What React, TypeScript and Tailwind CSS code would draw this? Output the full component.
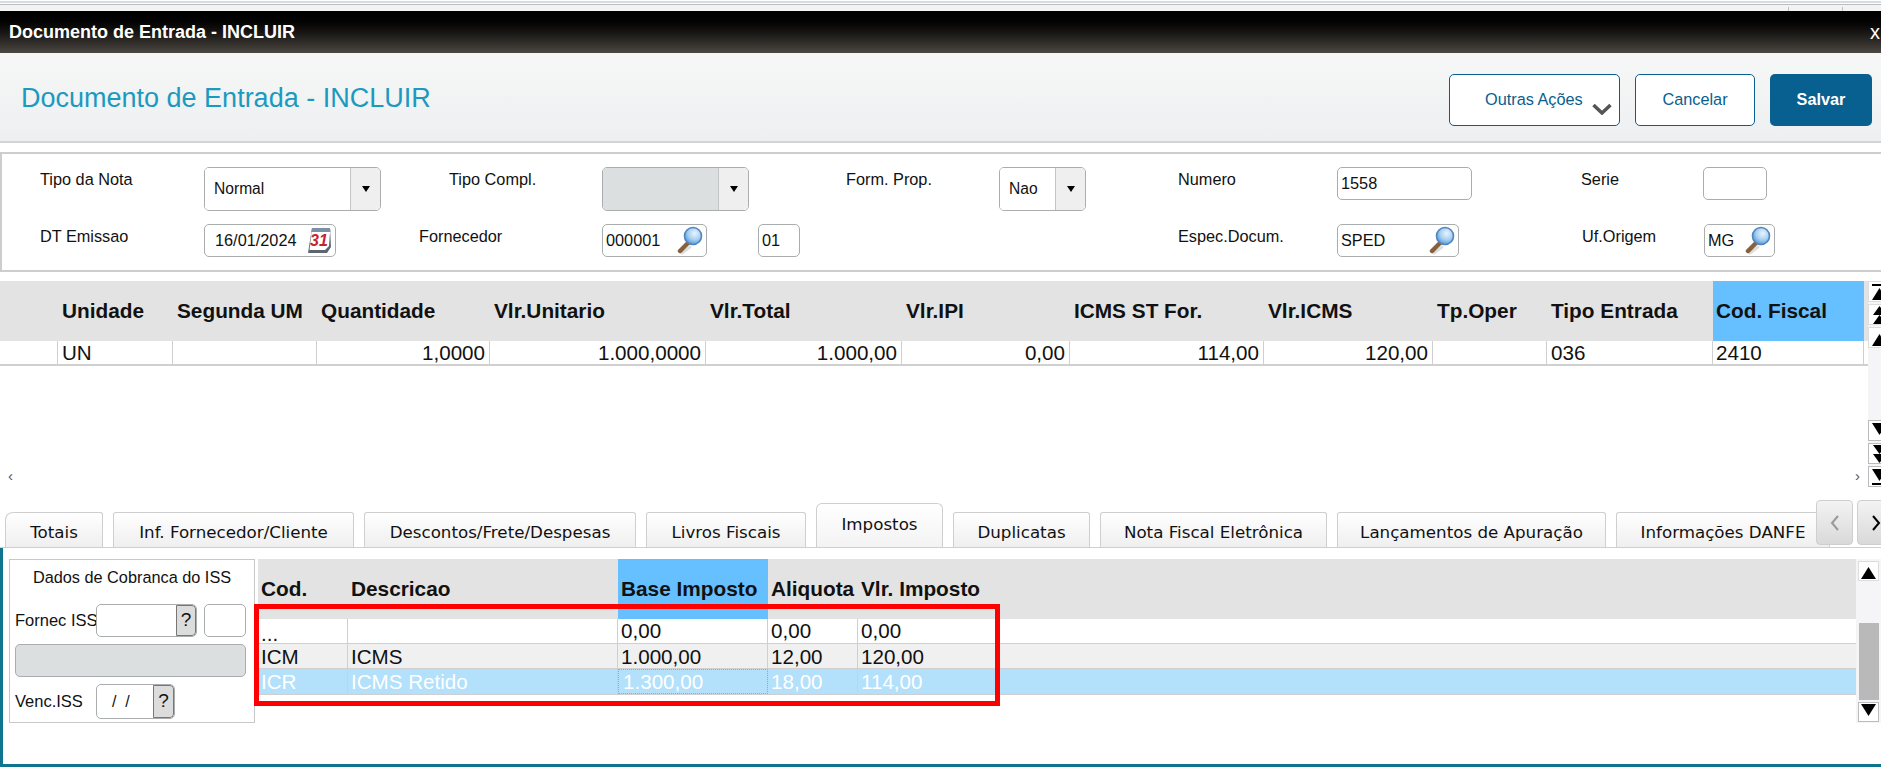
import React from "react";

const arial = "font-['Liberation_Sans',Arial,sans-serif]";

const Lupa = () => (
  <svg width="27" height="30" viewBox="0 0 27 30" className="shrink-0 -translate-x-[1px]">
    <defs>
      <radialGradient id="lens" cx="0.6" cy="0.35" r="0.7">
        <stop offset="0" stopColor="#e8f4ff" />
        <stop offset="0.55" stopColor="#a6cff2" />
        <stop offset="1" stopColor="#4f8fd0" />
      </radialGradient>
    </defs>
    <path d="M11 17 L3 25" stroke="#8a5f3c" strokeWidth="4.5" strokeLinecap="round" />
    <path d="M5 27 L13 21" stroke="#00000022" strokeWidth="3" strokeLinecap="round" />
    <circle cx="16" cy="10" r="8.5" fill="url(#lens)" stroke="#4f86bd" strokeWidth="1.6" />
  </svg>
);

const Calendario = () => (
  <svg width="26" height="28" viewBox="0 0 26 28" className="shrink-0">
    <path d="M5 1 H23 L24 20 L20 26 H1 Z" fill="#5d6670" />
    <path d="M5 1 H23 L23.5 5 H4.6 Z" fill="#7d8fa8" />
    <path d="M4.5 5 H23 L22 19 L18 23 H2.5 Z" fill="#fff" />
    <text x="12" y="19" textAnchor="middle" fontSize="16" fontWeight="700" fontStyle="italic" fill="#c8232c" fontFamily="Liberation Sans, sans-serif">31</text>
  </svg>
);

const Tri = ({ down = false, bar = 0, dbl = false, size = 13 }: { down?: boolean; bar?: number; dbl?: boolean; size?: number }) => (
  <svg width={size + 2} height="18" viewBox="0 0 15 18" className="shrink-0">
    {!down && bar > 0 && <rect x="0" y="1" width="15" height="2" fill="#000" />}
    {!down && dbl && <path d="M7.5 0 L14 9 H1 Z" fill="#000" />}
    {!down && <path d={dbl ? "M7.5 9 L14 18 H1 Z" : "M7.5 5 L15 17 H0 Z"} fill="#000" />}
    {down && dbl && <path d="M1 9 H14 L7.5 18 Z" fill="#000" />}
    {down && <path d={dbl ? "M1 0 H14 L7.5 9 Z" : "M0 1 H15 L7.5 13 Z"} fill="#000" />}
    {down && bar > 0 && <rect x="0" y="15" width="15" height="2" fill="#000" />}
  </svg>
);

const Label = ({ text, className }: { text: string; className: string }) => (
  <div className={`text-[16.3px] leading-[24px] text-[#111] whitespace-nowrap ${className}`}>{text}</div>
);

const Select = ({ value, width, off = false }: { value: string; width: string; off?: boolean }) => (
  <div className={`flex h-[44px] shrink-0 overflow-hidden rounded-[5px] border border-[#a9adad] ${width}`}>
    <div className={`flex flex-1 items-center pl-[9px] text-[15.6px] text-[#111] ${off ? "bg-[#dcdfdf]" : "bg-white"}`}>{value}</div>
    <div className="flex w-[30px] items-center justify-center border-l border-[#c4c4c4] bg-[#efefef]">
      <span className="h-0 w-0 border-x-[4px] border-t-[6px] border-x-transparent border-t-black" />
    </div>
  </div>
);

const Input = ({ value = "", width, pad = "pl-[3px]", children }: { value?: string; width: string; pad?: string; children?: React.ReactNode }) => (
  <div className={`flex h-[33px] shrink-0 items-center justify-between rounded-[5px] border border-[#a9adad] bg-white text-[16.3px] text-[#111] ${pad} ${width}`}>
    <span>{value}</span>
    {children}
  </div>
);

const gridCols = [
  { w: "w-[58px]", h: "", v: "", right: false },
  { w: "w-[115px]", h: "Unidade", v: "UN", right: false },
  { w: "w-[144px]", h: "Segunda UM", v: "", right: false },
  { w: "w-[173px]", h: "Quantidade", v: "1,0000", right: true },
  { w: "w-[216px]", h: "Vlr.Unitario", v: "1.000,0000", right: true },
  { w: "w-[196px]", h: "Vlr.Total", v: "1.000,00", right: true },
  { w: "w-[168px]", h: "Vlr.IPI", v: "0,00", right: true },
  { w: "w-[194px]", h: "ICMS ST For.", v: "114,00", right: true },
  { w: "w-[169px]", h: "Vlr.ICMS", v: "120,00", right: true },
  { w: "w-[114px]", h: "Tp.Oper", v: "", right: false },
  { w: "w-[166px]", h: "Tipo Entrada", v: "036", right: false },
  { w: "w-[151px]", h: "Cod. Fiscal", v: "2410", right: false },
];

const tabs = [
  { t: "Totais", w: "w-[98px]", first: true },
  { t: "Inf. Fornecedor/Cliente", w: "w-[241px]" },
  { t: "Descontos/Frete/Despesas", w: "w-[272px]" },
  { t: "Livros Fiscais", w: "w-[160px]" },
  { t: "Impostos", w: "w-[127px]", active: true },
  { t: "Duplicatas", w: "w-[137px]" },
  { t: "Nota Fiscal Eletrônica", w: "w-[227px]" },
  { t: "Lançamentos de Apuração", w: "w-[269px]" },
  { t: "Informações DANFE", w: "w-[214px]" },
];

const impCols = [
  { w: "w-[90px]", h: "Cod.", hl: false },
  { w: "w-[270px]", h: "Descricao", hl: false },
  { w: "w-[150px]", h: "Base Imposto", hl: true },
  { w: "w-[90px]", h: "Aliquota", hl: false },
  { w: "flex-1", h: "Vlr. Imposto", hl: false },
];

const impRows = [
  { bg: "bg-white text-[#111] leading-[24px]", h: "h-[25px]", line: "border-[#cfcfcf]", cells: ["...", "", "0,00", "0,00", "0,00"] },
  { bg: "bg-[#f0f0f0] text-[#111] leading-[26px]", h: "h-[25px]", line: "border-[#cfcfcf]", cells: ["ICM", "ICMS", "1.000,00", "12,00", "120,00"] },
  { bg: "bg-[#b3e0fb] text-white leading-[26px]", h: "h-[26px]", line: "border-[#cfcfcf]", cells: ["ICR", "ICMS Retido", "1.300,00", "18,00", "114,00"] },
];

export default function App() {
  return (
    <div className={`flex h-[772px] w-[1881px] flex-col overflow-hidden bg-white ${arial}`}>
      {/* faixa do navegador */}
      <div className="relative h-[11px] shrink-0 bg-white">
        <div className="mt-[1px] h-[2px] bg-[#d5dde3]" />
        <div className="mt-[1px] h-[1px] bg-[#bdbdbd]" />
        <div className="flex h-[6px] justify-end gap-[53px] bg-[#f3f3f3] pr-[38px]">
          <span className="mt-[2px] h-[4px] w-px bg-[#c0c0c0]" />
          <span className="mt-[2px] h-[4px] w-px bg-[#c0c0c0]" />
        </div>
      </div>

      <div className="flex h-[42px] shrink-0 items-center justify-between bg-gradient-to-b from-black to-[#4b4742] pl-[9px] text-[18px] font-bold text-white">
        <span>Documento de Entrada - INCLUIR</span>
        <span className="mr-[1px] text-[20px] font-normal">x</span>
      </div>

      <div className="flex h-[90px] shrink-0 items-center justify-between border-b-2 border-[#d4d4d4] bg-gradient-to-b from-[#f6f7f6] to-[#eeeff1] pl-[21px] pr-[9px]">
        <h1 className="mt-[2px] text-[27px] text-[#1b9ac0]">Documento de Entrada - INCLUIR</h1>
        <div className="mt-[6px] flex gap-[15px] text-[16.3px] text-[#0a5e8f]">
          <button className="relative flex h-[52px] w-[171px] items-center rounded-[5px] border border-[#0a5e8f] bg-white pl-[35px] pb-[1px]">
            Outras Ações
            <svg width="20" height="12" viewBox="0 0 20 12" className="absolute left-[142px] top-[28px]">
              <path d="M1.5 2 L10 10 L18.5 2" fill="none" stroke="#555" strokeWidth="3.5" />
            </svg>
          </button>
          <button className="h-[52px] w-[120px] rounded-[5px] border border-[#0a5e8f] bg-white pb-[1px]">Cancelar</button>
          <button className="h-[52px] w-[102px] rounded-[5px] bg-[#07608f] pb-[1px] font-bold text-white">Salvar</button>
        </div>
      </div>

      {/* formulario */}
      <div className="mt-[9px] h-[120px] shrink-0 border-y-2 border-l-2 border-[#cdcdcd] pl-[38px] pt-[13px]">
        <div className="flex h-[44px] items-start">
          <Label text="Tipo da Nota" className="w-[164px]" />
          <Select value="Normal" width="w-[177px]" />
          <Label text="Tipo Compl." className="ml-[68px] w-[153px]" />
          <Select value="" width="w-[147px]" off />
          <Label text="Form. Prop." className="ml-[97px] w-[153px]" />
          <Select value="Nao" width="w-[87px]" />
          <Label text="Numero" className="ml-[92px] w-[159px]" />
          <Input value="1558" width="w-[135px]" />
          <Label text="Serie" className="ml-[109px] w-[122px]" />
          <Input width="w-[64px]" />
        </div>
        <div className="mt-[13px] flex items-start">
          <Label text="DT Emissao" className="w-[164px]" />
          <Input value="16/01/2024" width="w-[132px]" pad="pl-[10px] pr-[2px]"><Calendario /></Input>
          <Label text="Fornecedor" className="ml-[83px] w-[183px]" />
          <Input value="000001" width="w-[105px]" pad="pl-[3px] pr-[1px]"><Lupa /></Input>
          <Input value="01" width="ml-[51px] w-[42px]" pad="pl-[3px]" />
          <Label text="Espec.Docum." className="ml-[378px] w-[159px]" />
          <Input value="SPED" width="w-[122px]" pad="pl-[3px] pr-[1px]"><Lupa /></Input>
          <Label text="Uf.Origem" className="ml-[123px] w-[122px]" />
          <Input value="MG" width="w-[71px]" pad="pl-[3px] pr-[1px]"><Lupa /></Input>
        </div>
      </div>

      {/* grade de itens */}
      <div className="mt-[9px] flex h-[227px] shrink-0">
        <div className="relative w-[1868px] shrink-0">
          <div className="flex h-[60px] bg-[#e3e3e3] text-[20.8px] font-bold text-[#111]">
            {gridCols.map((c) => (
              <div key={c.h || "x"} className={`flex shrink-0 items-center whitespace-nowrap ${c.w} ${c.h === "Cod. Fiscal" ? "bg-[#66bfff] pl-[3px]" : "pl-[4px]"}`}>
                {c.h}
              </div>
            ))}
          </div>
          <div className="flex h-[25px] border-b-2 border-[#d0d0d0] text-[20.6px] leading-[24px] text-[#111]">
            {gridCols.map((c) => (
              <div key={c.h || "x"} className={`shrink-0 whitespace-nowrap border-r border-[#cfcfcf] ${c.w} ${c.right ? "px-[4px] text-right" : c.h === "Cod. Fiscal" ? "pl-[3px]" : "px-[4px]"}`}>
                {c.v}
              </div>
            ))}
          </div>
          <div className="flex justify-between pl-[8px] pr-[8px] pt-[100px] text-[15px] leading-[20px] text-[#555]">
            <span>‹</span>
            <span>›</span>
          </div>
        </div>
        <div className="flex h-[206px] w-[13px] shrink-0 flex-col justify-between bg-[#f5f5f7]">
          <div className="flex flex-col gap-[2px]">
            <div className="flex h-[21px] w-[16px] items-center border border-[#ddd] bg-white pl-[3px]"><Tri bar={1} /></div>
            <div className="flex h-[21px] w-[16px] items-center border border-[#ddd] bg-white pl-[3px]"><Tri dbl /></div>
            <div className="flex h-[21px] w-[16px] items-center border border-[#ddd] bg-white pl-[3px]"><Tri /></div>
          </div>
          <div className="flex flex-col gap-[2px]">
            <div className="flex h-[21px] w-[16px] items-center border border-[#bbb] bg-white pl-[3px]"><Tri down /></div>
            <div className="flex h-[21px] w-[16px] items-center border border-[#bbb] bg-white pl-[3px]"><Tri down dbl /></div>
            <div className="flex h-[21px] w-[16px] items-center border border-[#bbb] bg-white pl-[3px]"><Tri down bar={1} /></div>
          </div>
        </div>
      </div>

      {/* abas */}
      <div className="relative -mt-[4px] flex h-[44px] shrink-0 items-end gap-[10px] border-b border-[#cfcfcf] pl-[5px] font-['DejaVu_Sans',Verdana,sans-serif] text-[16.7px] text-[#111]">
        {tabs.map((t) => (
          <div
            key={t.t}
            className={`flex shrink-0 items-center justify-center whitespace-nowrap rounded-t-[3px] border border-b-0 border-[#cfcfcf] bg-gradient-to-b from-white to-[#efefef] ${t.w} ${t.active ? "h-[44px] rounded-t-[6px] pb-[2px] to-[#f3f3f3]" : "h-[35px] pt-[6px]"} ${t.first ? "rounded-tl-[8px]" : ""}`}
          >
            {t.t}
          </div>
        ))}
        <div className="absolute left-[1816px] top-[-4px] flex gap-[4px]">
          <div className="flex h-[45px] w-[37px] items-center justify-center rounded-[4px] border border-[#cfcfcf] bg-gradient-to-b from-[#f3f3f3] to-[#d9d9d9]">
            <svg width="10" height="16" viewBox="0 0 10 16"><path d="M8 1 L2 8 L8 15" fill="none" stroke="#999" strokeWidth="2" /></svg>
          </div>
          <div className="flex h-[45px] w-[37px] items-center justify-center rounded-[4px] border border-[#cfcfcf] bg-gradient-to-b from-[#f3f3f3] to-[#d9d9d9]">
            <svg width="10" height="16" viewBox="0 0 10 16"><path d="M2 1 L8 8 L2 15" fill="none" stroke="#000" strokeWidth="2" /></svg>
          </div>
        </div>
      </div>

      {/* painel inferior */}
      <div className="relative flex h-[219px] shrink-0 border-b-[3px] border-l-[3px] border-[#0e7490] pl-[6px] pt-[11px]">
        <div className="h-[164px] w-[246px] shrink-0 border border-[#c8c8c8] px-[5px]">
          <div className="mt-[7px] text-center text-[16.3px] leading-[20px] text-[#111] whitespace-nowrap">Dados de Cobranca do ISS</div>
          <div className="mt-[17px] flex items-center">
            <span className="w-[81px] text-[16.5px] text-[#111] whitespace-nowrap">Fornec ISS</span>
            <div className="flex h-[33px] w-[101px] justify-end overflow-hidden rounded-[5px] border border-[#a9adad] bg-white">
              <span className="flex w-[20px] items-center justify-center rounded-r-[4px] border border-[#777] bg-[#dcdcdc] text-[19px] text-[#111]">?</span>
            </div>
            <div className="ml-[7px] h-[33px] w-[42px] rounded-[5px] border border-[#a9adad] bg-white" />
          </div>
          <div className="mt-[7px] h-[33px] w-[231px] rounded-[5px] border border-[#a9adad] bg-[#dcdfdf]" />
          <div className="mt-[7px] flex items-center">
            <span className="w-[81px] text-[16.5px] text-[#111]">Venc.ISS</span>
            <div className="flex h-[35px] w-[79px] items-center justify-between overflow-hidden rounded-[5px] border border-[#a9adad] bg-white pl-[15px] text-[16px] text-[#111]">
              <span>/ &nbsp;/</span>
              <span className="flex h-full w-[21px] items-center justify-center rounded-r-[4px] border border-[#777] bg-[#dcdcdc] text-[19px]">?</span>
            </div>
          </div>
        </div>

        <div className="ml-[3px] w-[1598px] shrink-0">
          <div className="flex h-[60px] bg-[#e3e3e3] text-[20.8px] font-bold text-[#111]">
            {impCols.map((c) => (
              <div key={c.h} className={`flex items-center whitespace-nowrap pl-[3px] ${c.w} ${c.hl ? "bg-[#66bfff]" : ""}`}>{c.h}</div>
            ))}
          </div>
          {impRows.map((r) => (
            <div key={r.cells[0]} className={`flex border-b ${r.line} ${r.bg} ${r.h} text-[20.6px]`}>
              {r.cells.map((v, i) => (
                <div key={i} className={`whitespace-nowrap pl-[3px] ${impCols[i].w} ${i < 4 ? `border-r ${r.line}` : ""} ${v === "1.300,00" ? "outline-1 -outline-offset-1 outline-dotted outline-[#f08a7a] pl-[5px]" : ""} ${v === "..." ? "pt-[3px]" : ""}`}>{v}</div>
              ))}
            </div>
          ))}
        </div>

        <div className="flex h-[164px] w-[25px] shrink-0 flex-col items-center bg-[#f5f5f7] pt-[2px]">
          <div className="flex h-[20px] w-[21px] items-center justify-center border border-[#ddd] bg-white"><Tri /></div>
          <div className="mt-[42px] h-[77px] w-[20px] bg-[#b9b9b9]" />
          <div className="mt-[2px] flex h-[20px] w-[21px] items-center justify-center border border-[#bbb] bg-white"><Tri down /></div>
        </div>

        {/* destaque vermelho */}
        <div className="absolute left-[251px] top-[56px] h-[102px] w-[746px] border-[5px] border-[#ff0000]" />
      </div>
    </div>
  );
}
